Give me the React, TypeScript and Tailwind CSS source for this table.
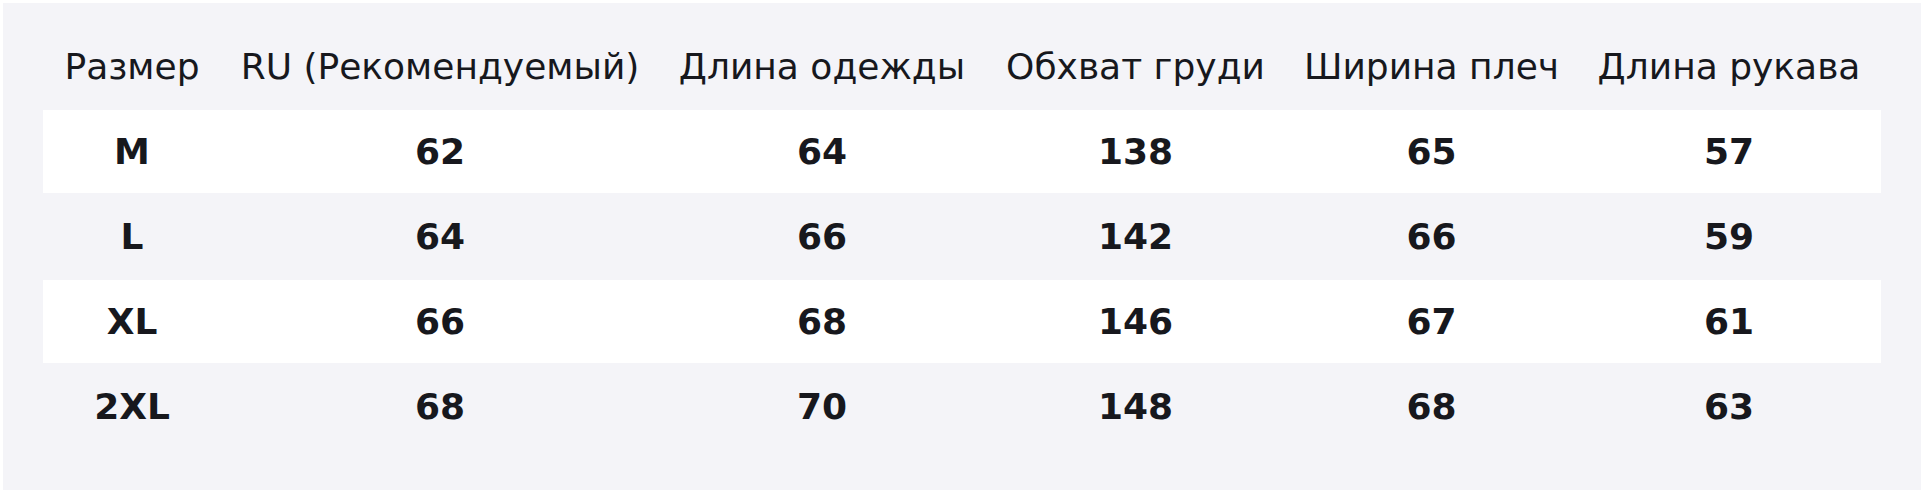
// Size chart — RU sizing table

const HEADERS = [
  'Размер',
  'RU (Рекомендуемый)',
  'Длина одежды',
  'Обхват груди',
  'Ширина плеч',
  'Длина рукава',
];

const ROWS: string[][] = [
  ['M', '62', '64', '138', '65', '57'],
  ['L', '64', '66', '142', '66', '59'],
  ['XL', '66', '68', '146', '67', '61'],
  ['2XL', '68', '70', '148', '68', '63'],
];

const GRID = 'grid grid-cols-[178px_438px_326px_301px_291px_304px]';

export default function App() {
  return (
    <div
      className="min-h-[493px] bg-white p-[3px] text-[#17181d]"
      style={{ fontFamily: '"DejaVu Sans", Verdana, sans-serif' }}
    >
      <div className="bg-[#f4f4f8] p-[40px]">
        <div className="w-[1838px]">
          {/* header */}
          <div className={`${GRID} pt-[3px] pb-[22px]`}>
            {HEADERS.map((h) => (
              <div key={h} className="whitespace-nowrap text-center text-[36px] leading-[42px]">
                {h}
              </div>
            ))}
          </div>

          {/* rows: 83px band + 2px gap in panel colour */}
          {ROWS.map((row, i) => (
            <div
              key={row[0]}
              className={`${GRID} mb-[2px] h-[83px] items-center ${
                i % 2 === 0 ? 'bg-white' : 'bg-[#f4f4f8]'
              }`}
            >
              {row.map((cell, j) => (
                <div key={j} className="text-center text-[36px] font-bold leading-[42px]">
                  {cell}
                </div>
              ))}
            </div>
          ))}
        </div>
      </div>
    </div>
  );
}
